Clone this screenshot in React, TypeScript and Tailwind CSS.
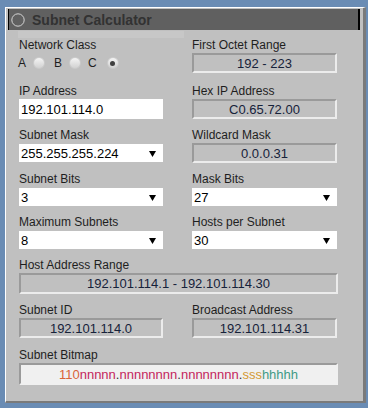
import React from "react";

const Label = ({ children }: { children: React.ReactNode }) => (
  <div className="h-[14px] leading-[14px] text-[12px] text-[#1e1e1e] mb-[1px] whitespace-nowrap">{children}</div>
);

const ReadBox = ({ children, h = "h-[20px]" }: { children: React.ReactNode; h?: string }) => (
  <div
    className={`${h} border-2 border-t-[#9a9a9a] border-l-[#9a9a9a] border-b-[#ececec] border-r-[#ececec] flex items-center justify-center text-[13px] text-[#16223a] leading-none`}
  >
    {children}
  </div>
);

const Arrow = () => (
  <svg width="7" height="7" viewBox="0 0 7 7">
    <path d="M0 1 L7 1 L3.5 7 Z" fill="#000" />
  </svg>
);

const Select = ({ value }: { value: string }) => (
  <div className="h-[20px] py-[1px]">
    <div className="h-[18px] bg-white flex items-center justify-between pl-[2px] pr-[7px] text-[13px] text-black leading-none">
      <span>{value}</span>
      <Arrow />
    </div>
  </div>
);

const Radio = ({ checked = false, className = "" }: { checked?: boolean; className?: string }) => (
  <div
    className={`w-[12px] h-[12px] rounded-full border border-[#cbcbcb] bg-linear-to-b from-[#f4f4f4] to-[#d2d2d2] flex items-center justify-center ${className}`}
  >
    {checked && <div className="w-[5px] h-[5px] rounded-full bg-[#404040]" />}
  </div>
);

export default function App() {
  return (
    <div
      className="w-[368px] h-[408px] bg-[#6a8cb4] pt-[7px] pl-[5px]"
      style={{ fontFamily: '"Liberation Sans", Arial, sans-serif' }}
    >
      <div className="w-[361px] h-[396px] bg-[#c0c0c0] border-l border-t border-l-white border-t-white border-r-[3px] border-b-[2px] border-r-[#7a7a7a] border-b-[#7a7a7a] pt-[1px]">
        <div className="ml-[2px] w-[352px] h-[21px] bg-[#606060] border-l border-l-black border-r-2 border-r-black flex items-center">
          <svg width="14" height="14" viewBox="0 0 14 14" className="ml-[2px]">
            <circle cx="7" cy="7" r="6.2" fill="none" stroke="#d4d4d4" strokeWidth="1" />
          </svg>
          <span className="ml-[7px] text-[14px] font-bold text-[#323232] leading-none">Subnet Calculator</span>
        </div>
        <div className="mt-[1px] ml-[12px] w-[166px] h-[7px] bg-[#c7c7c7]" />

        <div className="px-[13px]">
          <div className="grid grid-cols-[144px_145px] gap-x-[29px]">
            <div>
              <Label>Network Class</Label>
              <div className="h-[20px] flex items-center text-[12px] text-[#1e1e1e] -ml-[1px]">
                <span>A</span>
                <Radio className="ml-[7px]" />
                <span className="ml-[9px]">B</span>
                <Radio className="ml-[7px]" />
                <span className="ml-[7px]">C</span>
                <Radio className="ml-[10px]" checked />
              </div>
            </div>
            <div>
              <Label>First Octet Range</Label>
              <ReadBox>192 - 223</ReadBox>
            </div>
          </div>

          <div className="mt-[11px] grid grid-cols-[144px_145px] gap-x-[29px]">
            <div>
              <Label>IP Address</Label>
              <div className="h-[20px] bg-white flex items-center pl-[2px] text-[13px] text-black leading-none">
                192.101.114.0
              </div>
            </div>
            <div>
              <Label>Hex IP Address</Label>
              <ReadBox>C0.65.72.00</ReadBox>
            </div>
          </div>

          <div className="mt-[9px] grid grid-cols-[144px_145px] gap-x-[29px]">
            <div>
              <Label>Subnet Mask</Label>
              <Select value="255.255.255.224" />
            </div>
            <div>
              <Label>Wildcard Mask</Label>
              <ReadBox>0.0.0.31</ReadBox>
            </div>
          </div>

          <div className="mt-[9px] grid grid-cols-[144px_145px] gap-x-[29px]">
            <div>
              <Label>Subnet Bits</Label>
              <Select value="3" />
            </div>
            <div>
              <Label>Mask Bits</Label>
              <Select value="27" />
            </div>
          </div>

          <div className="mt-[8px] grid grid-cols-[144px_145px] gap-x-[29px]">
            <div>
              <Label>Maximum Subnets</Label>
              <Select value="8" />
            </div>
            <div>
              <Label>Hosts per Subnet</Label>
              <Select value="30" />
            </div>
          </div>

          <div className="mt-[8px] w-[319px]">
            <Label>Host Address Range</Label>
            <ReadBox h="h-[21px]">192.101.114.1 - 192.101.114.30</ReadBox>
          </div>

          <div className="mt-[9px] grid grid-cols-[144px_145px] gap-x-[29px]">
            <div>
              <Label>Subnet ID</Label>
              <ReadBox>192.101.114.0</ReadBox>
            </div>
            <div>
              <Label>Broadcast Address</Label>
              <ReadBox>192.101.114.31</ReadBox>
            </div>
          </div>

          <div className="mt-[10px] w-[319px]">
            <Label>Subnet Bitmap</Label>
            <div className="h-[22px] bg-[#f0f0f0] border-2 border-t-[#9a9a9a] border-l-[#9a9a9a] border-b-[#f0f0f0] border-r-[#f0f0f0] flex items-center justify-center text-[13px] leading-none">
              <span className="text-[#d9643a]">110</span>
              <span className="text-[#c41f5c]">nnnnn</span>
              <span className="text-[#333]">.</span>
              <span className="text-[#c41f5c]">nnnnnnnn</span>
              <span className="text-[#333]">.</span>
              <span className="text-[#c41f5c]">nnnnnnnn</span>
              <span className="text-[#333]">.</span>
              <span className="text-[#d49a34]">sss</span>
              <span className="text-[#3f9a86]">hhhhh</span>
            </div>
          </div>
        </div>
      </div>
    </div>
  );
}
